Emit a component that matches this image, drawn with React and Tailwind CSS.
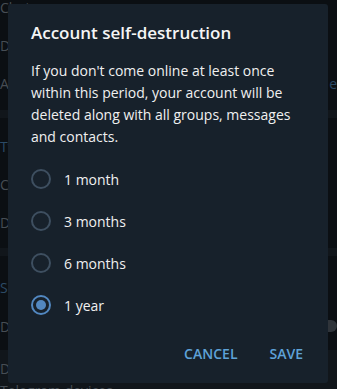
import React, { useState } from "react";

const options = ["1 month", "3 months", "6 months", "1 year"];

function Radio({ checked }) {
  return (
    <span
      className={`flex items-center justify-center w-[20px] h-[20px] rounded-full border-2 ${
        checked ? "border-[#5288c1]" : "border-[#3e4f60]"
      }`}
    >
      {checked && <span className="w-[10px] h-[10px] rounded-full bg-[#5288c1]"></span>}
    </span>
  );
}

export default function App() {
  const [selected, setSelected] = useState("1 year");

  return (
    <div
      className="relative w-[337px] h-[389px] overflow-hidden bg-[#0b0f13]"
      style={{ fontFamily: '"Open Sans", sans-serif' }}
    >
      {/* settings page behind the dim overlay */}
      <div className="flex flex-col text-[14px] text-[#464d54]">
        <div className="h-[38px] -mt-[12px] flex items-center">Chats</div>
        <div className="h-[38px] flex items-center">Disabled</div>
        <div className="h-[38px] flex items-center justify-between">
          <span>ALL</span>
          <span className="text-[#2b4a66]">e</span>
        </div>
        <div className="h-[8px] mt-[8px] bg-[#11161b]"></div>
        <div className="h-[38px] mt-[9px] flex items-center text-[#2b4a66]">Two</div>
        <div className="h-[38px] flex items-center">Chats</div>
        <div className="h-[38px] flex items-center">Disabled</div>
        <div className="h-[8px] mt-[7px] bg-[#11161b]"></div>
        <div className="h-[38px] mt-[12px] flex items-center text-[#2b4a66]">Security</div>
        <div className="h-[40px] flex items-center justify-between">
          <span>Disabled</span>
          <span className="w-[20px] h-[12px] rounded-full bg-[#2f343a]"></span>
        </div>
        <div className="flex-1 mt-[4px] bg-[#11161b] pt-[6px]">
          <div className="h-[24px] flex items-center">Disabled</div>
          <div className="h-[20px] flex items-center">Telegram devices</div>
        </div>
      </div>

      {/* dialog */}
      <div className="absolute left-[8px] top-[4px] w-[320px] h-[379px] rounded-[3px] bg-[#17212b] flex flex-col pl-[23px] pr-[20px]">
        <h2 className="mt-[16px] text-[17px] leading-[26px] font-semibold text-[#f5f5f5]">
          Account self-destruction
        </h2>
        <p className="mt-[14px] text-[14px] leading-[22px] text-[#f0f0f0]">
          If you don't come online at least once within this period, your account will be deleted along with all groups, messages and contacts.
        </p>
        <div className="mt-[10px] flex flex-col">
          {options.map((o) => (
            <button
              key={o}
              onClick={() => setSelected(o)}
              className="h-[42px] flex items-center gap-[13px] text-left"
            >
              <Radio checked={selected === o} />
              <span className="text-[14px] text-[#f0f0f0]">{o}</span>
            </button>
          ))}
        </div>
        <div className="mt-auto mb-[19px] flex justify-end gap-[32px] pr-[5px] text-[14px] font-semibold text-[#5ea2d8]">
          <button>CANCEL</button>
          <button>SAVE</button>
        </div>
      </div>
    </div>
  );
}
